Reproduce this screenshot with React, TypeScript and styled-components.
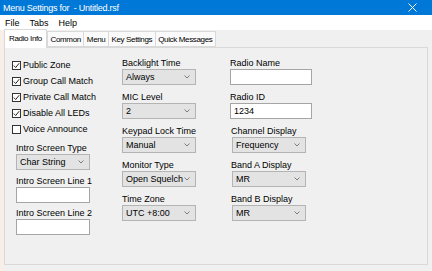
import React from "react";
import styled, { createGlobalStyle } from "styled-components";

const GlobalStyle = createGlobalStyle`
  html, body {
    margin: 0;
    padding: 0;
    background: #ffffff;
  }
  body {
    font-family: "Liberation Sans", Arial, sans-serif;
    color: #000;
  }
`;

// window chrome

const Window = styled.div`
  width: 432px;
  height: 271px;
  display: flex;
  flex-direction: column;
  overflow: hidden;
  font-family: "Liberation Sans", Arial, sans-serif;
`;

const TitleBar = styled.div`
  height: 16px;
  background: #0078d7;
  color: #ffffff;
  display: flex;
  align-items: center;
  justify-content: space-between;
  padding: 0 15px 0 3px;
  font-size: 9px;
  letter-spacing: -0.25px;
  white-space: pre;
`;

const MenuBar = styled.div`
  height: 14px;
  background: #ffffff;
  display: flex;
  align-items: center;
  gap: 10px;
  padding: 1px 0 0 5px;
  font-size: 9px;
`;

const Body = styled.div`
  flex: 1;
  display: flex;
  flex-direction: column;
  background: #f0f0f0;
  border-left: 3px solid #faeee6;
  padding: 1px 4px 6px 1px;
`;

// tabs

const TabStrip = styled.div`
  height: 16px;
  display: flex;
  align-items: flex-end;
`;

const Tab = styled.div<{ $active?: boolean }>`
  height: ${(p) => (p.$active ? 17 : 14)}px;
  margin-bottom: ${(p) => (p.$active ? -1 : 0)}px;
  margin-right: ${(p) => (p.$active ? 0 : -1)}px;
  position: relative;
  z-index: ${(p) => (p.$active ? 2 : 1)};
  display: flex;
  align-items: center;
  padding: ${(p) => (p.$active ? "0 4px 1px" : "0 2.5px")};
  background: ${(p) => (p.$active ? "#ffffff" : "#fafafa")};
  border: 1px solid #d9d9d9;
  border-bottom: ${(p) => (p.$active ? "none" : "1px solid #d9d9d9")};
  font-size: 8px;
  letter-spacing: -0.35px;
  white-space: nowrap;
`;

const TabPage = styled.div`
  height: 218px;
  box-sizing: border-box;
  background: #f0f0f0;
  border: 1px solid #d9d9d9;
  display: grid;
  grid-template-columns: 110px 108px 1fr;
  align-items: start;
  padding: 9px 0 0 7px;
`;

// form parts

const Column = styled.div<{ $top?: number }>`
  display: flex;
  flex-direction: column;
  padding-top: ${(p) => p.$top ?? 0}px;
`;

const CheckRow = styled.label`
  height: 16px;
  display: flex;
  align-items: center;
  gap: 2px;
  font-size: 9px;
  white-space: nowrap;
`;

const Box = styled.span`
  width: 9px;
  height: 9px;
  box-sizing: border-box;
  border: 1px solid #333333;
  background: #ffffff;
  display: flex;
  align-items: center;
  justify-content: center;
`;

const Field = styled.div<{ $gap: number; $indent?: number }>`
  display: flex;
  flex-direction: column;
  margin-top: ${(p) => p.$gap}px;
  margin-left: ${(p) => p.$indent ?? 0}px;
`;

const Label = styled.div`
  height: 11px;
  line-height: 11px;
  font-size: 9px;
  white-space: nowrap;
`;

const Combo = styled.div<{ $shift?: number }>`
  width: 74px;
  height: 16px;
  box-sizing: border-box;
  margin-left: ${(p) => p.$shift ?? 0}px;
  background: #e3e3e3;
  border: 1px solid #b4b4b4;
  display: flex;
  align-items: center;
  justify-content: space-between;
  padding: 0 5px 0 3px;
  font-size: 9px;
  white-space: nowrap;
`;

const TextBox = styled.div<{ $width: number }>`
  width: ${(p) => p.$width}px;
  height: 16px;
  box-sizing: border-box;
  background: #ffffff;
  border: 1px solid #a5a5a5;
  display: flex;
  align-items: center;
  padding-left: 3px;
  font-size: 9px;
`;

const Close = () => (
  <svg width="9" height="9" viewBox="0 0 9 9">
    <path d="M0.5 0.5 L8.5 8.5 M8.5 0.5 L0.5 8.5" stroke="#fff" strokeWidth="1" />
  </svg>
);

const Chevron = () => (
  <svg width="6" height="4" viewBox="0 0 6 4">
    <path d="M0.5 0.5 L3 3 L5.5 0.5" stroke="#707070" fill="none" strokeWidth="0.9" />
  </svg>
);

const Check = ({ on }: { on: boolean }) => (
  <Box>
    {on && (
      <svg width="7" height="7" viewBox="0 0 7 7">
        <path d="M0.8 3.6 L2.7 5.5 L6.2 1.2" stroke="#222" fill="none" strokeWidth="1" />
      </svg>
    )}
  </Box>
);

const Select = ({ value, shift }: { value: string; shift?: number }) => (
  <Combo $shift={shift}>
    <span>{value}</span>
    <Chevron />
  </Combo>
);

const checks = [
  { name: "Public Zone", on: true },
  { name: "Group Call Match", on: true },
  { name: "Private Call Match", on: true },
  { name: "Disable All LEDs", on: true },
  { name: "Voice Announce", on: false },
];

const middle = [
  { label: "Backlight Time", value: "Always" },
  { label: "MIC Level", value: "2" },
  { label: "Keypad Lock Time", value: "Manual" },
  { label: "Monitor Type", value: "Open Squelch" },
  { label: "Time Zone", value: "UTC +8:00" },
];

const tabs = ["Radio Info", "Common", "Menu", "Key Settings", "Quick Messages"];

export default function App() {
  return (
    <>
      <GlobalStyle />
      <Window>
        <TitleBar>
          <span>Menu Settings for  - Untitled.rsf</span>
          <Close />
        </TitleBar>
        <MenuBar>
          <span>File</span>
          <span>Tabs</span>
          <span>Help</span>
        </MenuBar>
        <Body>
          <TabStrip>
            {tabs.map((t, i) => (
              <Tab key={t} $active={i === 0}>
                {t}
              </Tab>
            ))}
          </TabStrip>
          <TabPage>
            <Column>
              {checks.map((c) => (
                <CheckRow key={c.name}>
                  <Check on={c.on} />
                  {c.name}
                </CheckRow>
              ))}
              <Field $gap={6} $indent={4}>
                <Label>Intro Screen Type</Label>
                <Select value="Char String" />
              </Field>
              <Field $gap={6} $indent={4}>
                <Label>Intro Screen Line 1</Label>
                <TextBox $width={74} />
              </Field>
              <Field $gap={5} $indent={4}>
                <Label>Intro Screen Line 2</Label>
                <TextBox $width={74} />
              </Field>
            </Column>
            <Column $top={1}>
              {middle.map((m, i) => (
                <Field key={m.label} $gap={i === 0 ? 0 : 7}>
                  <Label>{m.label}</Label>
                  <Select value={m.value} />
                </Field>
              ))}
            </Column>
            <Column $top={1}>
              <Field $gap={0}>
                <Label>Radio Name</Label>
                <TextBox $width={82} />
              </Field>
              <Field $gap={7}>
                <Label>Radio ID</Label>
                <TextBox $width={82}>1234</TextBox>
              </Field>
              <Field $gap={7} $indent={1}>
                <Label>Channel Display</Label>
                <Select value="Frequency" shift={1} />
              </Field>
              <Field $gap={7} $indent={1}>
                <Label>Band A Display</Label>
                <Select value="MR" shift={1} />
              </Field>
              <Field $gap={7} $indent={1}>
                <Label>Band B Display</Label>
                <Select value="MR" shift={1} />
              </Field>
            </Column>
          </TabPage>
        </Body>
      </Window>
    </>
  );
}
